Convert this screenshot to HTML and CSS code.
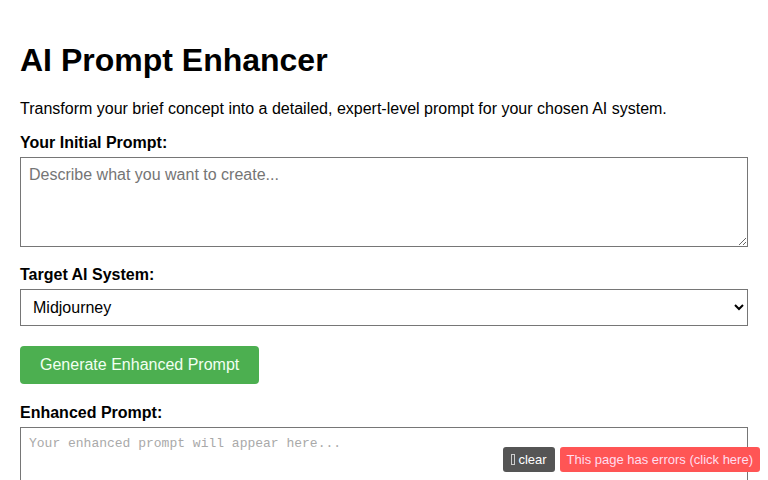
FILE: index.html
```html
<!DOCTYPE html>
<html lang="en">
<head>
<meta charset="utf-8">
<title>AI Prompt Enhancer</title>
<link rel="stylesheet" href="styles.css">
</head>
<body>
<div class="container">
  <h1>AI Prompt Enhancer</h1>
  <p>Transform your brief concept into a detailed, expert-level prompt for your chosen AI system.</p>
  <div class="form-group">
    <label for="initial">Your Initial Prompt:</label>
    <textarea id="initial" class="input-area" placeholder="Describe what you want to create..."></textarea>
  </div>
  <div class="form-group">
    <label for="target">Target AI System:</label>
    <select id="target" class="select">
      <option>Midjourney</option>
      <option>DALL-E</option>
      <option>Stable Diffusion</option>
      <option>ChatGPT</option>
    </select>
  </div>
  <div class="actions">
    <button class="generate">Generate Enhanced Prompt</button>
  </div>
  <div class="form-group">
    <label for="output">Enhanced Prompt:</label>
    <textarea id="output" class="output-area" readonly placeholder="Your enhanced prompt will appear here..."></textarea>
  </div>
</div>
<div class="error-bar">
  <span class="badge badge-clear"><span class="tofu"></span>clear</span>
  <span class="badge badge-error">This page has errors (click here)</span>
</div>
</body>
</html>
```
FILE: styles.css
```css
html, body {
  margin: 0;
  padding: 0;
  background: #fff;
}
body {
  font-family: "Liberation Sans", Arial, sans-serif;
  font-size: 16px;
  color: #000;
}
.container {
  padding: 20px;
}
h1 {
  font-size: 32px;
  margin: 22px 0 21px;
}
p {
  margin: 16px 0;
}
.form-group {
  margin-bottom: 15px;
}
label {
  display: block;
  font-weight: bold;
  margin-bottom: 5px;
}
.input-area {
  width: 100%;
  height: 90px;
  box-sizing: border-box;
  padding: 8px;
  font-family: "Liberation Sans", Arial, sans-serif;
  font-size: 16px;
  border: 1px solid #767676;
  margin: 0;
}
.input-area::placeholder {
  color: #757575;
}
.select {
  width: 100%;
  box-sizing: border-box;
  height: 37px;
  padding: 8px;
  font-family: "Liberation Sans", Arial, sans-serif;
  font-size: 16px;
  border: 1px solid #767676;
  border-radius: 0;
  background: #fff;
  color: #000;
  margin: 0;
}
.actions {
  margin-top: 20px;
  margin-bottom: 20px;
}
.generate {
  display: block;
  background: #4caf50;
  color: #f2fff2;
  border: none;
  border-radius: 4px;
  padding: 10px 20px;
  font-family: "Liberation Sans", Arial, sans-serif;
  font-size: 16px;
  line-height: 18px;
  cursor: pointer;
}
.output-area {
  width: 100%;
  height: 150px;
  box-sizing: border-box;
  padding: 8px;
  font-family: "Liberation Mono", monospace;
  font-size: 13px;
  border: 1px solid #767676;
  margin: 0;
}
.output-area::placeholder {
  color: #a9a9a9;
}
.error-bar {
  position: fixed;
  right: 8px;
  bottom: 8px;
  display: flex;
  gap: 5px;
  font-family: "Liberation Sans", Arial, sans-serif;
  font-size: 13px;
}
.badge {
  display: inline-flex;
  align-items: center;
  height: 25px;
  box-sizing: border-box;
  padding: 0 8px;
  border-radius: 3px;
  color: #fff;
}
.badge-clear {
  background: #555;
}
.badge-error {
  background: #f55;
  color: #fde;
  padding: 0 7px;
}
.tofu {
  display: inline-block;
  width: 2px;
  height: 9px;
  border: 1px solid #ccc;
  margin-right: 3px;
}
```
